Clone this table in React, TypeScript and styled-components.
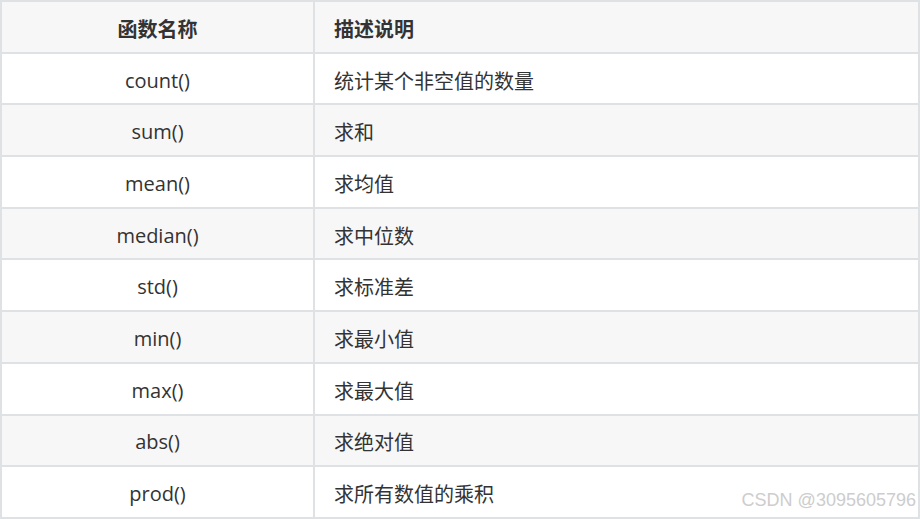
import React from "react";
import styled, { createGlobalStyle } from "styled-components";

const Global = createGlobalStyle`
  html, body { margin: 0; padding: 0; background: #ffffff; }
  body { font-family: "Open Sans", "Noto Sans CJK SC", sans-serif; }
`;

const Page = styled.div`
  position: relative;
  width: 920px;
  height: 519px;
  overflow: hidden;
  background: #ffffff;
`;

const Table = styled.div`
  display: grid;
  grid-template-columns: 311px 1fr;
  grid-auto-rows: 49.7px;
  gap: 2px;
  padding: 2px;
  width: 920px;
  box-sizing: border-box;
  background: #dfe2e5;
`;

const Cell = styled.div<{ $shade: boolean; $head?: boolean; $center?: boolean }>`
  display: flex;
  align-items: center;
  box-sizing: border-box;
  justify-content: ${(p) => (p.$center ? "center" : "flex-start")};
  padding: 3px ${(p) => (p.$center ? "0" : "19px")} 0;
  background: ${(p) => (p.$shade ? "#f7f7f7" : "#ffffff")};
  color: #333333;
  font-family: "Open Sans", "Noto Sans CJK SC", sans-serif;
  font-size: 20px;
  font-weight: ${(p) => (p.$head ? 700 : 400)};
  white-space: nowrap;
`;

const Watermark = styled.div`
  position: absolute;
  right: 4px;
  bottom: 8px;
  font-family: "Liberation Sans", Arial, sans-serif;
  font-size: 18px;
  color: #cdcdcd;
  text-shadow: 0 0 1px #ffffff;
`;

const rows: [string, string][] = [
  ["count()", "统计某个非空值的数量"],
  ["sum()", "求和"],
  ["mean()", "求均值"],
  ["median()", "求中位数"],
  ["std()", "求标准差"],
  ["min()", "求最小值"],
  ["max()", "求最大值"],
  ["abs()", "求绝对值"],
  ["prod()", "求所有数值的乘积"],
];

export default function App() {
  return (
    <Page>
      <Global />
      <Table>
        <Cell $shade $head $center>函数名称</Cell>
        <Cell $shade $head>描述说明</Cell>
        {rows.map(([fn, desc], i) => (
          <React.Fragment key={fn}>
            <Cell $shade={i % 2 === 1} $center>{fn}</Cell>
            <Cell $shade={i % 2 === 1}>{desc}</Cell>
          </React.Fragment>
        ))}
      </Table>
      <Watermark>CSDN @3095605796</Watermark>
    </Page>
  );
}
